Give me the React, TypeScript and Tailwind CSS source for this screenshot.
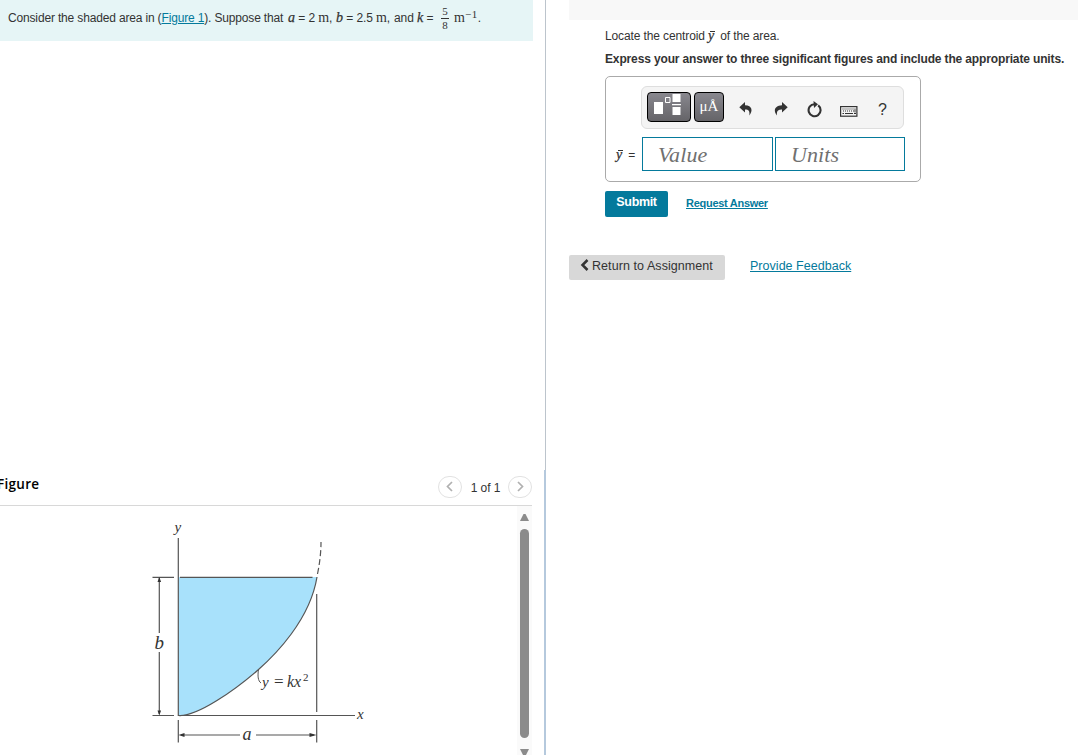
import { useState } from "react";
import type { ReactNode } from "react";

function MathVar({ children }: { children: ReactNode }) {
  return (
    <i className="font-['Liberation_Serif',serif] text-[14px] leading-none tracking-normal [-webkit-text-stroke:0.25px]">
      {children}
    </i>
  );
}

function YBar() {
  return (
    <span className="relative inline-block w-[9px] leading-none">
      <MathVar>y</MathVar>
      <span className="absolute top-[2px] left-[2px] h-px w-[5px] bg-[#333]" />
    </span>
  );
}

function Statement() {
  return (
    <div className="flex h-[41px] w-[533px] items-start bg-[#e6f5f6] pl-2 text-[12px] leading-[36px] whitespace-nowrap text-[#333]">
      <span className="w-[280px] tracking-[-0.16px]">
        Consider the shaded area in (
        <a href="#figure" className="text-[#047a9c] underline">Figure 1</a>
        ). Suppose that
      </span>
      <span className="w-[48px] tracking-[-0.1px]">
        <MathVar>a</MathVar> = 2 <span className="font-['Liberation_Serif',serif] text-[14px]">m</span>,
      </span>
      <span className="w-[58px] tracking-[-0.1px]">
        <MathVar>b</MathVar> = 2.5 <span className="font-['Liberation_Serif',serif] text-[14px]">m</span>,
      </span>
      <span className="w-[23px] tracking-[-0.1px]">and</span>
      <span className="w-[24px]">
        <MathVar>k</MathVar> =
      </span>
      <span className="flex w-[8px] flex-col items-center pt-[5px] font-['Liberation_Serif',serif] text-[11px] leading-[13px]">
        <span className="h-[14px] w-full border-b border-[#333] text-center">5</span>
        <span className="leading-[12px]">8</span>
      </span>
      <span className="pl-[5px] font-['Liberation_Serif',serif] text-[14px]">
        m<span className="relative -top-[4px] text-[11px] tracking-[0.6px]">−1</span>
      </span>
      <span>.</span>
    </div>
  );
}

function FigureDrawing() {
  return (
    <svg
      width="240"
      height="245"
      viewBox="140 510 240 245"
      fill="none"
      stroke="#555"
      strokeWidth="1.2"
      className="ml-[140px] shrink-0"
    >
      <path
        d="M178.5 577H317C310 620 275 655 258 670C235 690 197 717 178.5 715.5Z"
        fill="#a8e1fb"
        stroke="none"
      />
      <path d="M317 577C310 620 275 655 258 670C235 690 197 717 178.5 715.5" />
      <path d="M178.3 538V716M180 577.3H312.5M178 715.5H355" />
      <path d="M317.5 574Q321 557 321 542" strokeDasharray="6 3" />
      <path d="M152.5 577.3H174M152.5 715.5H174M159.3 578V633M159.3 652V714" />
      <path d="M316.7 594V712M316.7 720V742.5M178.3 720V742.5M181 735H240M256 735H314" />
      <path d="M258.5 669.5C257.5 676 258 681 261 683" strokeWidth="1" />
      <g fill="#333" stroke="none">
        <path d="M159.3 577l-1.8 5h3.6zM159.3 715.5l-1.8-5h3.6zM178.5 735l6-2v4zM316.5 735l-7-2v4z" />
        <g fontFamily="Liberation Serif, serif" fontStyle="italic">
          <text x="174.5" y="532" fontSize="15">y</text>
          <text x="154.5" y="649" fontSize="19">b</text>
          <text x="242.5" y="740" fontSize="18">a</text>
          <text x="357" y="719" fontSize="15">x</text>
          <text x="262" y="686.5" fontSize="15">y</text>
          <text x="274" y="686.5" fontSize="17" fontStyle="normal">=</text>
          <text x="287" y="686.5" fontSize="16">kx</text>
          <text x="303" y="680.5" fontSize="11" fontStyle="normal">2</text>
        </g>
      </g>
    </svg>
  );
}

function PagerButton({ d }: { d: string }) {
  return (
    <button className="flex h-[22px] w-6 items-center justify-center rounded-full border border-[#e2e2e2]">
      <svg width="8" height="12" viewBox="0 0 8 12" fill="none" stroke="#b0b0b0" strokeWidth="1.7">
        <path d={d} />
      </svg>
    </button>
  );
}

function FigurePanel() {
  return (
    <section id="figure" className="flex h-[285px] flex-col border-r-2 border-[#b5c9dd]">
      <header className="flex h-[36px] w-[532px] items-start border-b border-[#d8d8d8]">
        <h2 className="-ml-[3px] flex-1 pt-[4px] font-['Open_Sans',sans-serif] text-[13.5px] leading-5 font-semibold tracking-[0.3px] text-black">
          Figure
        </h2>
        <div className="flex items-center pt-[6px] text-[12px] text-[#333]">
          <PagerButton d="M6 1L1.5 5.5L6 10" />
          <span className="w-[46px] pt-[2px] pl-px text-center tracking-[-0.1px]">1 of 1</span>
          <PagerButton d="M2 1L6.5 5.5L2 10" />
        </div>
      </header>
      <div className="flex h-[249px] w-[532px] justify-between overflow-hidden">
        <div className="flex h-[249px] pt-[4px]">
          <FigureDrawing />
        </div>
        <div className="flex w-[15px] flex-col items-center bg-[#fafafa] pt-[8px]">
          <svg width="9" height="7" className="shrink-0" fill="#8b8b8b">
            <path d="M3.5 0h2L9 7H0z" />
          </svg>
          <div className="mt-[8px] h-[209px] w-[9px] shrink-0 rounded-full bg-[#8b8b8b]" />
          <svg width="9" height="7" className="mt-[11px] shrink-0" fill="#8b8b8b">
            <path d="M0 0h9L5.5 7h-2z" />
          </svg>
        </div>
      </div>
    </section>
  );
}

function Toolbar() {
  return (
    <div className="flex h-[43px] w-[263px] items-start rounded-md border border-[#dedede] bg-[#f4f4f4] pt-[5px] pl-[5px] text-[#333]">
      <button
        aria-label="Templates"
        className="h-[30px] w-[44px] rounded-[4px] border border-black bg-linear-to-b from-[#89888f] to-[#656468]"
      >
        <svg width="42" height="28" fill="#fff">
          <path d="M6 9h9v12H6zM24.500 1h8v8h-8zM24.500 14h8v8h-8zM24 11h9v1.200H24z" />
          <path d="M17.500 4.500h4.500v5h-4.500z" fill="none" stroke="#fff" />
        </svg>
      </button>
      <button
        aria-label="Symbols"
        className="ml-[3px] h-[30px] w-[30px] rounded-[4px] border border-black bg-linear-to-b from-[#89888f] to-[#656468] pb-[3px] font-['Liberation_Serif',serif] text-[15px] leading-[24px] text-white"
      >
        μÅ
      </button>
      <svg width="14" height="14" viewBox="0 0 14 14" fill="#333" className="mt-[10px] ml-[15px]">
        <path d="M6 0L0.300 5.300L6 10.500V7.600C9.500 7.500 11 9 10.300 13.500C14 9 13.500 3.500 6 3.200Z" />
      </svg>
      <svg width="14" height="14" viewBox="0 0 14 14" fill="#333" className="mt-[10px] ml-[21px]">
        <path d="M8 0L13.700 5.300L8 10.500V7.600C4 7.500 2.300 9 3 13.500C-1 9 0.500 3.500 8 3.200Z" />
      </svg>
      <svg width="16" height="17" viewBox="0 0 16 17" className="mt-[9px] ml-[19px]">
        <path d="M11.200 4.400A6 6 0 1 1 7.500 3.200" fill="none" stroke="#333" strokeWidth="2.100" />
        <path d="M6.500 0L11 3.300L7 7Z" fill="#333" />
      </svg>
      <svg width="18" height="11" viewBox="0 0 18 11" fill="none" stroke="#333" className="mt-[14px] ml-[17px]">
        <rect x="0.600" y="0.600" width="16.300" height="9.600" strokeWidth="1.200" />
        <path d="M2.500 3H16M3 5H14.500" strokeDasharray="1 1" />
        <path d="M2.500 7.500H4M5 7.500H13M14 7.500H16" strokeWidth="1.200" />
        <path d="M15 3.500V6.500" strokeWidth="1" />
      </svg>
      <span className="mt-[8px] ml-[20px] text-[16px] leading-[20px]">?</span>
    </div>
  );
}

const fieldClass =
  "h-[34px] border border-[#047a9c] bg-white pt-px pl-[15px] font-['Liberation_Serif',serif] text-[22px] tracking-[0.1px] italic outline-none placeholder:text-[#707070]";

function AnswerBox() {
  const [value, setValue] = useState("");
  const [units, setUnits] = useState("");

  return (
    <div className="mt-[8px] flex h-[106px] w-[316px] flex-col rounded-[5px] border border-[#aaa] pt-[9px] pl-[10px]">
      <div className="pl-[25px]">
        <Toolbar />
      </div>
      <div className="mt-[8px] flex">
        <span className="w-[26px] pt-[8px] text-[12px] leading-[20px] whitespace-nowrap">
          <YBar /> =
        </span>
        <input
          value={value}
          onChange={(e) => setValue(e.target.value)}
          placeholder="Value"
          className={`${fieldClass} w-[131px]`}
        />
        <input
          value={units}
          onChange={(e) => setUnits(e.target.value)}
          placeholder="Units"
          className={`${fieldClass} ml-[2px] w-[130px]`}
        />
      </div>
    </div>
  );
}

export default function App() {
  return (
    <main className="flex h-[755px] w-[1078px] overflow-hidden bg-white font-['Liberation_Sans',Arial,sans-serif] text-[#333]">
      <div className="flex w-[546px] shrink-0 flex-col">
        <section className="h-[470px] border-r border-[#bcc4cc]">
          <Statement />
        </section>
        <FigurePanel />
      </div>

      <div className="flex flex-1 flex-col pl-[23px]">
        <div className="h-[20px] bg-[#f8f8f8]" />
        <section className="flex flex-col pt-[5px] pl-[36px] text-[12px] whitespace-nowrap">
          <p className="h-[22px] leading-[22px] tracking-[-0.12px]">
            <span>Locate the centroid </span>
            <YBar />
            <span> of the area.</span>
          </p>
          <p className="h-[21px] leading-[24px] font-bold tracking-[-0.14px]">
            Express your answer to three significant figures and include the appropriate units.
          </p>
          <AnswerBox />
          <div className="mt-[9px] flex">
            <button className="h-[26px] w-[63px] rounded-[2px] bg-[#047a9c] pb-[3px] text-[12.500px] leading-[23px] font-bold tracking-[-0.35px] text-white">
              Submit
            </button>
            <a href="#answer" className="ml-[18px] text-[11px] leading-[25px] font-bold tracking-[-0.28px] text-[#047a9c] underline">
              Request Answer
            </a>
          </div>
        </section>
        <div className="mt-[38px] flex text-[12.500px]">
          <button className="flex h-[25px] w-[156px] rounded-[2px] bg-[#d8d8d8] pl-[11px] leading-[22px] tracking-[0.07px] whitespace-nowrap">
            <svg width="9" height="12" viewBox="0 0 9 12" fill="none" stroke="#333" strokeWidth="2.500" className="mt-[4px] mr-[3px]">
              <path d="M7.500 1L2.500 6L7.500 11" />
            </svg>
            Return to Assignment
          </button>
          <a href="#feedback" className="ml-[25px] leading-[22px] tracking-[0.03px] text-[#047a9c] underline">
            Provide Feedback
          </a>
        </div>
      </div>
    </main>
  );
}
